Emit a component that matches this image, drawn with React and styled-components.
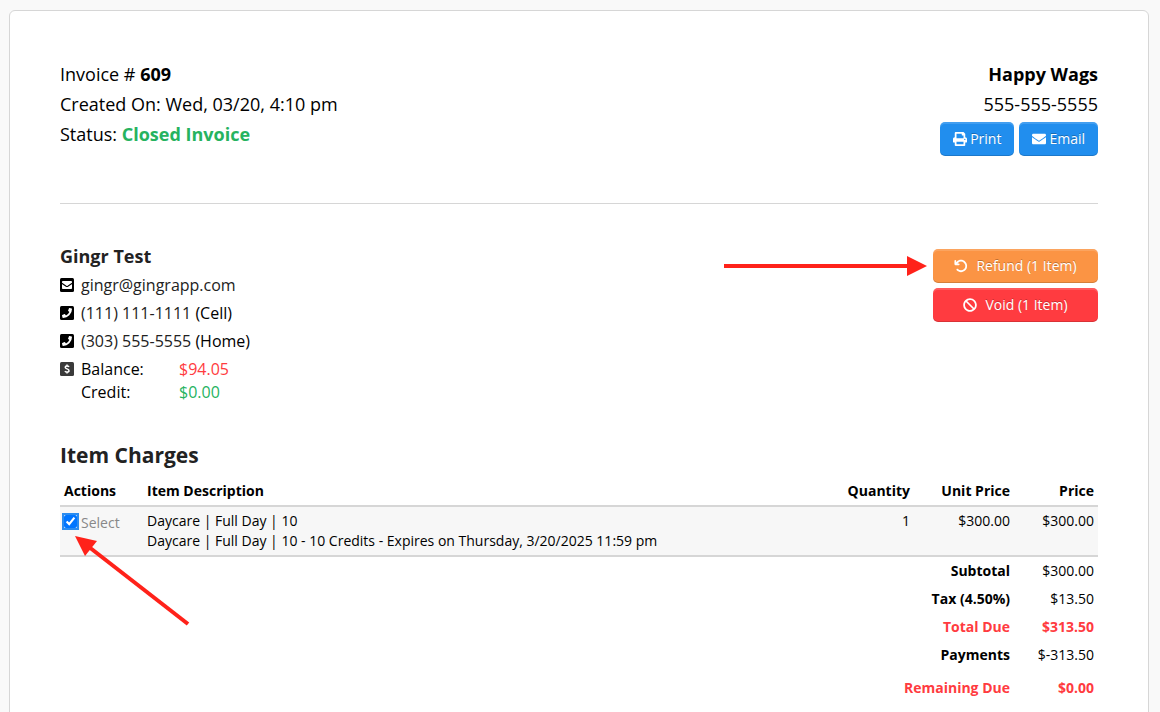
import React from 'react';
import styled, { createGlobalStyle } from 'styled-components';
import { FaBan, FaEnvelope, FaPrint } from 'react-icons/fa';
import { FaArrowRotateLeft } from 'react-icons/fa6';

const GlobalStyle = createGlobalStyle`
  *, *::before, *::after {
    box-sizing: border-box;
  }

  body {
    margin: 0;
    background: #f9f9f9;
    color: #000;
    font-family: 'Open Sans', 'Noto Sans', sans-serif;
    font-size: 14px;
    line-height: 20px;
  }
`;

const Card = styled.main`
  margin: 10px 11px 10px 9px;
  padding: 48px 50px;
  background: #fff;
  border: 1px solid #d6d6d6;
  border-radius: 6px;
`;

const Header = styled.header`
  display: flex;
  justify-content: space-between;
  padding-bottom: 47px;
  border-bottom: 1px solid #d6d6d6;
  font-size: 18px;
  line-height: 30px;
`;

const Line = styled.p`
  margin: 0;
`;

const Status = styled.strong`
  color: #26b35f;
`;

const Location = styled.div`
  text-align: right;
`;

const ButtonRow = styled.div`
  display: flex;
  justify-content: flex-end;
  gap: 5px;
  margin-top: 3px;
`;

const ButtonStack = styled.div`
  position: relative;
  display: flex;
  flex-direction: column;
  gap: 5px;
  width: 165px;
  padding-top: 6px;
`;

const colors = {
  primary: '#218eee',
  warning: '#fb9444',
  danger: '#ff3b40',
};

const Button = styled.button`
  display: flex;
  align-items: center;
  justify-content: center;
  gap: ${({ $wide }) => ($wide ? 8 : 3)}px;
  height: 34px;
  padding: 0 13px 1px;
  border: 0;
  border-radius: 5px;
  background: ${({ $kind }) => colors[$kind]};
  box-shadow:
    inset 0 -1px 0 rgba(0, 0, 0, 0.15),
    inset 0 2px 0 rgba(255, 255, 255, 0.15);
  color: #fff;
  font: inherit;
  font-size: 14px;
  line-height: 20px;
  text-shadow: 0 -1px 0 rgba(0, 0, 0, 0.25);
`;

const Customer = styled.section`
  display: flex;
  justify-content: space-between;
  margin-top: 39px;
`;

const Name = styled.h2`
  margin: 0 0 2px;
  color: #222;
  font-size: 18px;
  line-height: 26px;
`;

const Contact = styled.div`
  display: flex;
  align-items: center;
  gap: 7px;
  font-size: 16px;
  line-height: 28px;
`;

const ContactLink = styled.a`
  color: #222;
  text-decoration: none;
`;

const Account = styled.div`
  display: flex;
  gap: 7px;
  padding-top: 3px;
  font-size: 16px;
  line-height: 23px;

  svg {
    margin-top: 4px;
  }
`;

const Balances = styled.dl`
  display: grid;
  grid-template-columns: 98px auto;
  margin: 0;
`;

const Label = styled.dt``;

const Amount = styled.dd`
  margin: 0;
  color: ${({ $due }) => ($due ? '#ff3b40' : '#26b35f')};
`;

const Title = styled.h1`
  margin: 37px 0 8px;
  color: #222;
  font-size: 21px;
  line-height: 28px;
`;

const Table = styled.table`
  width: 100%;
  border-collapse: separate;
  border-spacing: 0;
`;

const Th = styled.th`
  width: ${({ $width }) => $width || 'auto'};
  padding: 4px;
  border-bottom: 2px solid #d6d6d6;
  text-align: ${({ $right }) => ($right ? 'right' : 'left')};
`;

const Td = styled.td`
  padding: 4px;
  background: #f7f7f7;
  border-bottom: 2px solid #d6d6d6;
  text-align: ${({ $right }) => ($right ? 'right' : 'left')};
  vertical-align: top;
`;

const ActionCell = styled(Td)`
  position: relative;
`;

const Select = styled.label`
  display: flex;
  align-items: center;
  gap: 4px;
  padding-top: 2px;
  color: #888;
`;

const Checkbox = styled.input`
  width: 13px;
  height: 13px;
  margin: 0 0 4px;
  outline: 2px solid #2a8cf0;
`;

const TotalRow = styled.tr`
  color: ${({ $due }) => ($due ? '#ff3b40' : 'inherit')};

  th,
  td {
    padding: ${({ $last }) => ($last ? 9 : 4)}px 4px;
    text-align: right;
  }

  td {
    font-weight: ${({ $due }) => ($due ? 'bold' : 'normal')};
  }
`;

const RefundArrow = styled.svg`
  position: absolute;
  top: 13px;
  right: 171px;
`;

const SelectArrow = styled.svg`
  position: absolute;
  top: 29px;
  left: 15px;
  z-index: 1;
`;

const SquareIcon = ({ fill = '#000', children }) => (
  <svg width="14" height="14" viewBox="0 0 14 14" aria-hidden="true">
    <rect width="14" height="14" rx="1.5" fill={fill} />
    {children}
  </svg>
);

const EnvelopeSquare = () => (
  <SquareIcon>
    <rect x="2" y="3" width="10" height="8" rx="0.8" fill="#fff" />
    <path d="M1.8 5.2 6.2 8.3Q7 8.8 7.8 8.3L12.2 5.2" fill="none" stroke="#000" strokeWidth="1.1" />
  </SquareIcon>
);

const PhoneSquare = () => (
  <SquareIcon>
    <path
      d="M11.6 2.5 9.6 2a.5.5 0 0 0-.6.3L8.1 4.5a.5.5 0 0 0 .1.5l1.2 1a7.3 7.3 0 0 1-3.4 3.4L5 8.2a.5.5 0 0 0-.5-.1L2.3 9a.5.5 0 0 0-.3.6l.5 2a.5.5 0 0 0 .5.4A9 9 0 0 0 12 3a.5.5 0 0 0-.4-.5z"
      fill="#fff"
    />
  </SquareIcon>
);

const DollarSquare = () => (
  <SquareIcon fill="#3a3a3a">
    <path
      d="M9 4.8C8.6 4.200 7.900 4 7 4 5.900 4 5.200 4.500 5.200 5.300 5.200 7.200 9 6.600 9 8.700 9 9.500 8.200 10 7 10 6.100 10 5.300 9.700 4.900 9.100M7 2.500V4M7 10v1.500"
      fill="none"
      stroke="#fff"
      strokeWidth="1.5"
    />
  </SquareIcon>
);

const totals = [
  { label: 'Subtotal', amount: '$300.00' },
  { label: 'Tax (4.50%)', amount: '$13.50' },
  { label: 'Total Due', amount: '$313.50', due: true },
  { label: 'Payments', amount: '$-313.50' },
  { label: 'Remaining Due', amount: '$0.00', due: true, last: true },
];

const InvoiceHeader = () => (
  <Header>
    <div>
      <Line>Invoice # <strong>609</strong></Line>
      <Line>Created On: Wed, 03/20, 4:10 pm</Line>
      <Line>Status: <Status>Closed Invoice</Status></Line>
    </div>
    <Location>
      <Line><strong>Happy Wags</strong></Line>
      <Line>555-555-5555</Line>
      <ButtonRow>
        <Button type="button" $kind="primary"><FaPrint /> Print</Button>
        <Button type="button" $kind="primary"><FaEnvelope /> Email</Button>
      </ButtonRow>
    </Location>
  </Header>
);

const CustomerDetails = () => (
  <Customer>
    <div>
      <Name>Gingr Test</Name>
      <Contact>
        <EnvelopeSquare />
        <ContactLink href="mailto:gingr@gingrapp.com">gingr@gingrapp.com</ContactLink>
      </Contact>
      <Contact>
        <PhoneSquare />
        <span><ContactLink href="tel:1111111111">(111) 111-1111</ContactLink> (Cell)</span>
      </Contact>
      <Contact>
        <PhoneSquare />
        <span><ContactLink href="tel:3035555555">(303) 555-5555</ContactLink> (Home)</span>
      </Contact>
      <Account>
        <DollarSquare />
        <Balances>
          <Label>Balance:</Label>
          <Amount $due>$94.05</Amount>
          <Label>Credit:</Label>
          <Amount>$0.00</Amount>
        </Balances>
      </Account>
    </div>
    <ButtonStack>
      <RefundArrow width="203" height="20" viewBox="0 0 203 20" aria-hidden="true">
        <path d="M0 8h183V0l20 10-20 10v-8H0z" fill="#ff221a" />
      </RefundArrow>
      <Button type="button" $kind="warning" $wide><FaArrowRotateLeft /> Refund (1 Item)</Button>
      <Button type="button" $kind="danger" $wide><FaBan /> Void (1 Item)</Button>
    </ButtonStack>
  </Customer>
);

const Charges = () => (
  <Table>
    <thead>
      <tr>
        <Th $width="83px">Actions</Th>
        <Th>Item Description</Th>
        <Th $width="100px" $right>Quantity</Th>
        <Th $width="100px" $right>Unit Price</Th>
        <Th $width="84px" $right>Price</Th>
      </tr>
    </thead>
    <tbody>
      <tr>
        <ActionCell>
          <Select>
            <Checkbox type="checkbox" defaultChecked />
            Select
          </Select>
          <SelectArrow width="115" height="90" viewBox="0 0 115 90" aria-hidden="true">
            <path d="M14 11 113 88" stroke="#ff221a" strokeWidth="4" />
            <path d="M0 0 22 5 10 20z" fill="#ff221a" />
          </SelectArrow>
        </ActionCell>
        <Td>
          Daycare | Full Day | 10<br />
          Daycare | Full Day | 10 - 10 Credits - Expires on Thursday, 3/20/2025 11:59 pm
        </Td>
        <Td $right>1</Td>
        <Td $right>$300.00</Td>
        <Td $right>$300.00</Td>
      </tr>
    </tbody>
    <tfoot>
      {totals.map(({ label, amount, due, last }) => (
        <TotalRow key={label} $due={due} $last={last}>
          <th colSpan="4" scope="row">{label}</th>
          <td>{amount}</td>
        </TotalRow>
      ))}
    </tfoot>
  </Table>
);

const App = () => (
  <>
    <GlobalStyle />
    <Card>
      <InvoiceHeader />
      <CustomerDetails />
      <Title>Item Charges</Title>
      <Charges />
    </Card>
  </>
);

export default App;
